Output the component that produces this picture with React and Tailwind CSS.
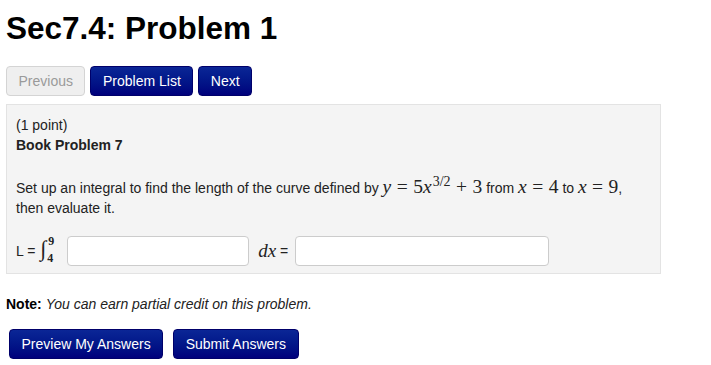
import React from "react";

const blueBtn =
  "h-[30px] px-[11.5px] rounded-[4px] border border-[#00006a] bg-gradient-to-b from-[#0b2696] to-[#00007c] text-white text-[14px] leading-5";

function M({ children }) {
  return (
    <span className="font-['Liberation_Serif',serif] text-[19.5px] leading-none">
      {children}
    </span>
  );
}

function Op({ children }) {
  return <span className="mx-[5.5px]">{children}</span>;
}

export default function App() {
  return (
    <div className="px-[6px] font-['Liberation_Sans',Arial,sans-serif] text-[14px] leading-5 text-[#222] bg-white min-h-screen">
      <h1 className="pt-[9px] text-[31.5px] leading-[38px] font-bold text-black">
        Sec7.4: Problem 1
      </h1>

      <div className="mt-[19px] flex gap-[5px]">
        <button className="h-[30px] px-[11.5px] rounded-[4px] border border-[#d4d4d4] bg-[#efefef] text-[#9a9a9a] text-[14px] leading-5">
          Previous
        </button>
        <button className={blueBtn}>Problem List</button>
        <button className={blueBtn}>Next</button>
      </div>

      <div className="mt-[8px] w-[655px] h-[170px] border border-[#e3e3e3] bg-[#f4f4f4] px-[9px] pt-[10px] text-[#222]">
        <div>(1 point)</div>
        <div className="font-bold">Book Problem 7</div>
        <div className="mt-[22px]">
          Set up an integral to find the length of the curve defined by{" "}
          <M>
            <i>y</i>
            <Op>=</Op>5<i>x</i>
            <sup className="text-[14px] ml-[1px]">3/2</sup>
            <Op>+</Op>3
          </M>{" "}
          from{" "}
          <M>
            <i>x</i>
            <Op>=</Op>4
          </M>{" "}
          to{" "}
          <M>
            <i>x</i>
            <Op>=</Op>9
          </M>
          ,
          <br />
          then evaluate it.
        </div>
        <div className="mt-[18px] flex items-center">
          <span>L =&nbsp;</span>
          <span className="relative inline-block font-['Liberation_Serif',serif] w-[20px] h-[30px]">
            <i className="absolute left-[1px] top-[2px] text-[22px] leading-none">∫</i>
            <span className="absolute left-[9px] top-[-1px] text-[12px] leading-none font-bold">9</span>
            <span className="absolute left-[8px] top-[16px] text-[12px] leading-none font-bold">4</span>
          </span>
          <input className="ml-[8px] w-[182px] h-[30px] rounded-[4px] border border-[#cccccc] bg-white" />
          <span className="ml-[9px] font-['Liberation_Serif',serif] text-[19px] italic">dx</span>
          <span>&nbsp;=&nbsp;</span>
          <input className="ml-[3px] w-[254px] h-[30px] rounded-[4px] border border-[#cccccc] bg-white" />
        </div>
      </div>

      <div className="mt-[20px] text-[#222]">
        <b className="text-black">Note:</b>{" "}
        <i>You can earn partial credit on this problem.</i>
      </div>

      <div className="mt-[15px] ml-[3px] flex gap-[10px]">
        <button className={blueBtn}>Preview My Answers</button>
        <button className={blueBtn}>Submit Answers</button>
      </div>
    </div>
  );
}
